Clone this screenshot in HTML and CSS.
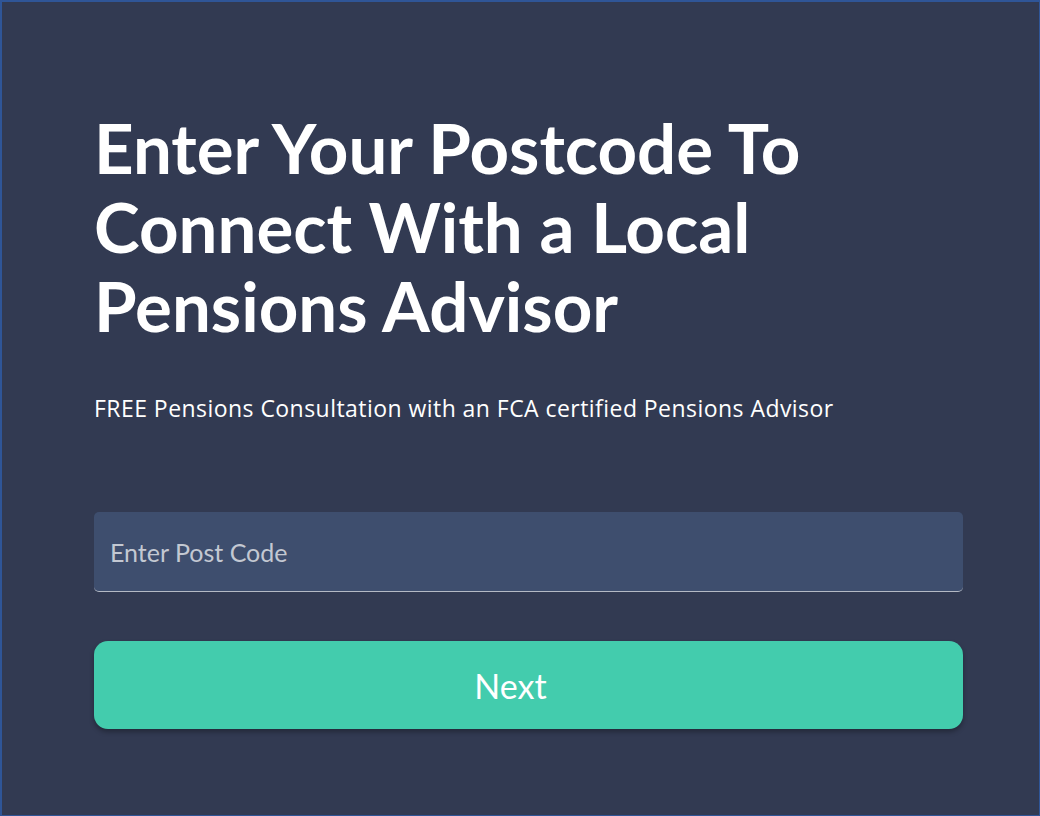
FILE: index.html
```html
<!DOCTYPE html>
<html lang="en">
<head>
    <meta charset="UTF-8">
    <meta name="viewport" content="width=device-width, initial-scale=1.0">
    <title>Pensions Advisor</title>
    <link rel="stylesheet" href="styles.css">
</head>
<body>
    <div class="frame">
        <div class="form-wrap">
            <h1 class="title">Enter Your Postcode To Connect With a Local Pensions Advisor</h1>
            <p class="subtitle">FREE Pensions Consultation with an FCA certified Pensions Advisor</p>

            <form class="postcode-form" onsubmit="return false;">
                <input type="text" class="postcode-input" placeholder="Enter Post Code">
                <button type="submit" class="next-btn">Next</button>
            </form>
        </div>
    </div>
</body>
</html>
```

FILE: styles.css
```css
html, body {
    margin: 0;
    padding: 0;
}
body {
    font-family: Lato, "Open Sans", sans-serif;
    background-color: #323a52;
}
.frame {
    box-sizing: border-box;
    width: 1040px;
    height: 816px;
    border: 2px solid #2f5597;
    border-bottom-width: 1px;
    border-right-width: 1px;
    background-color: #323a52;
    padding: 106px 76px 0 92px;
}
.form-wrap {
    width: 869px;
}
.title {
    margin: 0;
    color: #fff;
    font-size: 69px;
    font-weight: 700;
    line-height: 79px;
    width: 800px;
}
.subtitle {
    margin: 49px 0 0 0;
    color: #fff;
    font-family: "Open Sans", sans-serif;
    font-size: 23px;
    letter-spacing: 0.45px;
    line-height: 28px;
}
.postcode-form {
    margin-top: 90px;
}
.postcode-input {
    display: block;
    box-sizing: border-box;
    width: 100%;
    height: 80px;
    padding: 0 16px;
    border: none;
    border-bottom: 1px solid #b4b9c4;
    border-radius: 5px;
    background-color: #3e4e6e;
    color: #fff;
    font-family: Lato, "Open Sans", sans-serif;
    font-size: 25px;
    outline: none;
}
.postcode-input::placeholder {
    color: #c3c8d2;
}
.next-btn {
    display: block;
    width: 100%;
    height: 88px;
    margin-top: 49px;
    padding: 0 36px 0 0;
    border: none;
    border-radius: 14px;
    background-color: #43ccad;
    color: #fff;
    font-family: Lato, "Open Sans", sans-serif;
    font-size: 34px;
    cursor: pointer;
    box-shadow: 0 3px 5px rgba(0, 0, 0, 0.3);
}
```
